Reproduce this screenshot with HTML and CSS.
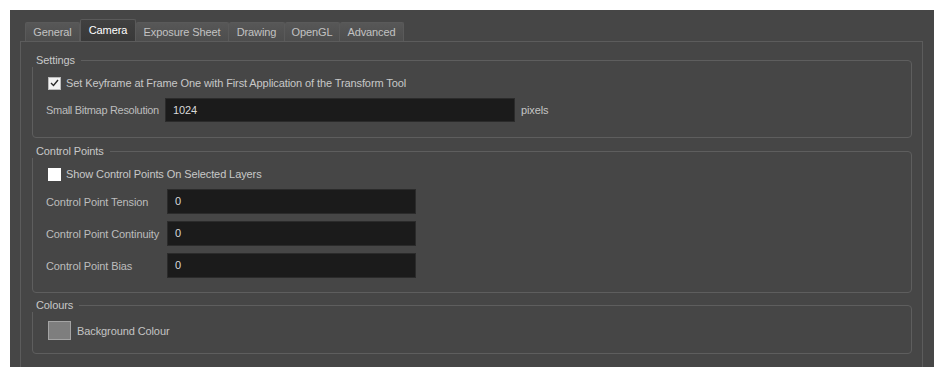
FILE: index.html
```html
<!DOCTYPE html>
<html lang="en">
<head>
  <meta charset="UTF-8">
  <title>Preferences - Camera</title>
  <link rel="stylesheet" href="styles.css">
</head>
<body>
  <div class="window">
    <div class="tabs">
      <div class="tab general">General</div>
      <div class="tab camera active">Camera</div>
      <div class="tab xsheet">Exposure Sheet</div>
      <div class="tab drawing">Drawing</div>
      <div class="tab opengl">OpenGL</div>
      <div class="tab advanced">Advanced</div>
    </div>

    <div class="pane">
      <fieldset class="group settings">
        <legend>Settings</legend>
        <label class="check-row">
          <span class="checkbox checked">
            <svg width="9" height="8" viewBox="0 0 9 8"><path d="M1 4 L3.5 6.5 L8 1" fill="none" stroke="#2b2b2b" stroke-width="1.4"/></svg>
          </span>
          Set Keyframe at Frame One with First Application of the Transform Tool
        </label>
        <div class="field-row bitmap">
          <span class="label">Small Bitmap Resolution</span>
          <div class="input">1024</div>
          <span class="unit">pixels</span>
        </div>
      </fieldset>

      <fieldset class="group points">
        <legend>Control Points</legend>
        <label class="check-row">
          <span class="checkbox"></span>
          Show Control Points On Selected Layers
        </label>
        <div class="field-row">
          <span class="label">Control Point Tension</span>
          <div class="input">0</div>
        </div>
        <div class="field-row">
          <span class="label">Control Point Continuity</span>
          <div class="input">0</div>
        </div>
        <div class="field-row">
          <span class="label">Control Point Bias</span>
          <div class="input">0</div>
        </div>
      </fieldset>

      <fieldset class="group colours">
        <legend>Colours</legend>
        <div class="colour-row">
          <span class="swatch"></span>
          Background Colour
        </div>
      </fieldset>
    </div>
  </div>
</body>
</html>
```

FILE: styles.css
```css
body {
  margin: 0;
  padding: 0;
  background: #ffffff;
  font-family: "Liberation Sans", Arial, sans-serif;
  font-size: 11px;
  letter-spacing: -0.1px;
}
.window {
  width: 924px;
  height: 357px;
  margin: 10px;
  padding: 9px 11px 0 10px;
  box-sizing: border-box;
  background: #464646;
  overflow: hidden;
  color: #c4c4c4;
}
.tabs {
  display: flex;
  align-items: flex-end;
  height: 22px;
  padding-left: 5px;
}
.tab {
  height: 18px;
  line-height: 18px;
  text-align: center;
  border: 1px solid #5a5a5a;
  border-bottom: none;
  border-left: none;
  border-radius: 2px 2px 0 0;
  background: linear-gradient(to bottom, #575757, #4d4d4d);
  color: #c2c2c2;
  white-space: nowrap;
}
.tab.general { width: 53px; border-left: 1px solid #5a5a5a; }
.tab.camera { width: 54px; }
.tab.xsheet { width: 92px; }
.tab.drawing { width: 55px; }
.tab.opengl { width: 54px; }
.tab.advanced { width: 63px; }
.tab.active {
  height: 21px;
  line-height: 20px;
  border-left: 1px solid #5a5a5a;
  background: linear-gradient(to bottom, #404040, #393939);
  color: #ffffff;
}
.pane {
  border: 1px solid #5c5c5c;
  height: 400px;
  padding: 12px 10px 0 11px;
}
.group {
  margin: 0 0 7px 0;
  padding: 9px 0 14px 13px;
  border: 1px solid #5e5e5e;
  border-radius: 4px;
  min-width: 0;
}
.group.settings {
  padding-bottom: 15px;
}
.group.points {
  margin-bottom: 6px;
}
.group legend {
  margin-left: -14px;
  padding: 0 6px 0 4px;
  line-height: 13px;
  color: #c8c8c8;
}
.check-row {
  display: flex;
  align-items: center;
  gap: 5px;
  height: 14px;
  padding-left: 2px;
  color: #c8c8c8;
}
.checkbox {
  width: 11px;
  height: 11px;
  background: #f2f2f2;
  border: 1px solid #bcbcbc;
  display: flex;
  align-items: center;
  justify-content: center;
}
.checkbox:not(.checked) {
  background: #ffffff;
  border-color: #ffffff;
}
.field-row {
  display: flex;
  align-items: center;
  margin-top: 8px;
  height: 24px;
  white-space: nowrap;
}
.field-row .label {
  width: 121px;
  color: #bdbdbd;
}
.input {
  width: 249px;
  height: 100%;
  box-sizing: border-box;
  background: #1b1b1b;
  border: 1px solid #2b2b2b;
  padding-left: 7px;
  line-height: 22px;
  color: #d8d8d8;
}
.bitmap .label {
  width: 119px;
  letter-spacing: -0.3px;
}
.bitmap .input {
  width: 350px;
}
.unit {
  margin-left: 6px;
}
.points .field-row + .field-row {
  margin-top: 7px;
}
.points .field-row {
  height: 25px;
}
.colours {
  padding-bottom: 13px;
}
.colour-row {
  display: flex;
  align-items: center;
  gap: 6px;
  padding-left: 2px;
  height: 19px;
}
.swatch {
  width: 21px;
  height: 17px;
  background: #7e7e7e;
  border: 1px solid #a4a4a4;
}
```
